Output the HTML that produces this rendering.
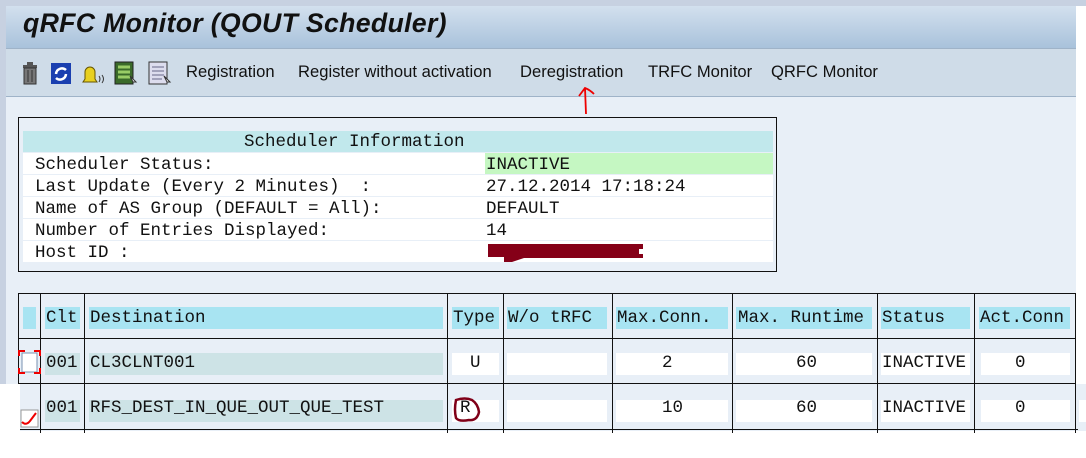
<!DOCTYPE html>
<html><head><meta charset="utf-8"><style>
*{margin:0;padding:0;box-sizing:border-box}
body{width:1086px;height:458px;position:relative;overflow:hidden;background:#fff;font-family:"Liberation Sans",sans-serif}
.a{position:absolute}
.m{font-family:"Liberation Mono","Courier New",monospace;font-size:17.5px;color:#111;white-space:pre;line-height:22px}
.tb{font-size:16.6px;color:#111;top:62px}
.h{background:#a8e4f2;height:22px;top:307px}
.d{height:22px}
.w{background:#fff}
.g{background:#cde3e6}
.vl{position:absolute;width:1px;background:#111;top:293px;height:140px}
.hl{position:absolute;height:1px;background:#111;left:18px}
.ir{position:absolute;left:23px;width:750px;height:21px;background:#fff}
</style></head><body>
<div class="a" style="left:0;top:0;width:1086px;height:384px;background:#c7d1e1"></div>
<div class="a" style="left:6px;top:6px;width:1070px;height:42px;background:linear-gradient(#d3e0ee,#a9c2db)"></div>
<div class="a" style="left:6px;top:48px;width:1070px;height:49px;background:#cfdce8;border-top:1px solid #9fb3c8;border-bottom:1px solid #9fb3c8"></div>
<div class="a" style="left:6px;top:97px;width:1070px;height:334px;background:#e8eff7"></div>
<div class="a" style="left:1076px;top:6px;width:10px;height:378px;background:#fff"></div>
<div class="a" style="left:0;top:384px;width:20px;height:74px;background:#fff"></div>
<div class="a" style="left:20px;top:384px;width:1066px;height:47px;background:#e8eff7"></div>
<div class="a" style="left:23px;top:8px;font-size:26.7px;font-weight:bold;font-style:italic;color:#111;letter-spacing:0.3px">qRFC Monitor (QOUT Scheduler)</div>
<svg class="a" style="left:20px;top:60px" width="160" height="28">
<rect x="3" y="5" width="14" height="3" fill="#555"/><rect x="7" y="2" width="6" height="3" fill="#555"/><rect x="4" y="8" width="12" height="16" fill="#777" stroke="#333"/><path d="M8 10v12M12 10v12" stroke="#333"/>
<rect x="31" y="3" width="20" height="21" fill="#1a3fb0"/><path d="M36 14a6 6 0 0 1 10-4M46 14a6 6 0 0 1-10 4" stroke="#fff" stroke-width="2.5" fill="none"/>
<path d="M63 22h14l-2-3v-7a5 5 0 0 0-10 0v7z" fill="#e8d020" stroke="#665500"/><path d="M79 16q2 3 0 6M82 15q3 4 0 8" stroke="#333" fill="none"/>
<rect x="95" y="2" width="18" height="22" fill="#3a6a2a" stroke="#222"/><path d="M98 7h12M98 12h12M98 17h12" stroke="#9c6" stroke-width="3"/><path d="M110 16l6 6-3 0z" fill="#fff" stroke="#333"/>
<rect x="129" y="2" width="18" height="22" fill="#dde" stroke="#333"/><path d="M132 7h12M132 11h12M132 15h12M132 19h10" stroke="#668"/><path d="M144 16l6 6-3 0z" fill="#fff" stroke="#333"/>
</svg>
<div class="a tb" style="left:186px">Registration</div>
<div class="a tb" style="left:298px">Register without activation</div>
<div class="a tb" style="left:520px">Deregistration</div>
<div class="a tb" style="left:648px">TRFC Monitor</div>
<div class="a tb" style="left:771px">QRFC Monitor</div>
<svg class="a" style="left:570px;top:84px" width="40" height="36"><path d="M16 30L15 4M9 12L15 4Q20 6 24 10" stroke="#e00" stroke-width="1.8" fill="none"/></svg>
<div class="a" style="left:18px;top:117px;width:759px;height:155px;border:1.5px solid #111;background:#e8eff7"></div>
<div class="a" style="left:23px;top:131px;width:750px;height:21px;background:#c1e8ec"></div>
<div class="a m" style="left:244px;top:131px">Scheduler Information</div>
<div class="ir" style="top:153px"></div><div class="a" style="left:485px;top:153px;width:288px;height:21px;background:#c5f7c2"></div>
<div class="ir" style="top:175px"></div><div class="ir" style="top:197px"></div><div class="ir" style="top:219px"></div><div class="ir" style="top:241px"></div>
<div class="a m" style="left:35px;top:154px">Scheduler Status:
Last Update (Every 2 Minutes)  :
Name of AS Group (DEFAULT = All):
Number of Entries Displayed:
Host ID :</div>
<div class="a m" style="left:486px;top:154px">INACTIVE
27.12.2014 17:18:24
DEFAULT
14</div>
<svg class="a" style="left:484px;top:240px" width="165" height="28"><path d="M4 4h155v5h-4v5h4v4H40l-12 4H20v-5H4z" fill="#850018"/></svg>
<div class="hl" style="top:293px;width:1058px"></div>
<div class="hl" style="top:338px;width:1058px"></div>
<div class="hl" style="top:383px;width:1058px"></div>
<div class="hl" style="top:429px;width:1058px;left:20px"></div>
<div class="vl" style="left:18px;height:91px"></div>
<div class="vl" style="left:40px"></div><div class="vl" style="left:84px"></div><div class="vl" style="left:447px"></div><div class="vl" style="left:503px"></div><div class="vl" style="left:612px"></div><div class="vl" style="left:732px"></div><div class="vl" style="left:877px"></div><div class="vl" style="left:974px"></div><div class="vl" style="left:1075px"></div>
<div class="a h" style="left:23px;width:13px"></div>
<div class="a h" style="left:45px;width:35px"></div>
<div class="a h" style="left:89px;width:354px"></div>
<div class="a h" style="left:452px;width:47px"></div>
<div class="a h" style="left:507px;width:100px"></div>
<div class="a h" style="left:616px;width:112px"></div>
<div class="a h" style="left:736px;width:136px"></div>
<div class="a h" style="left:881px;width:89px"></div>
<div class="a h" style="left:979px;width:91px"></div>
<div class="a m" style="left:46px;top:307px">Clt</div><div class="a m" style="left:90px;top:307px">Destination</div><div class="a m" style="left:453px;top:307px">Type</div><div class="a m" style="left:508px;top:307px">W/o tRFC</div><div class="a m" style="left:617px;top:307px">Max.Conn.</div><div class="a m" style="left:738px;top:307px">Max. Runtime</div><div class="a m" style="left:882px;top:307px">Status</div><div class="a m" style="left:980px;top:307px">Act.Conn</div>
<div class="a d g" style="left:45px;top:353px;width:35px"></div><div class="a d g" style="left:89px;top:353px;width:354px"></div>
<div class="a d w" style="left:452px;top:353px;width:47px"></div><div class="a d w" style="left:507px;top:353px;width:100px"></div><div class="a d w" style="left:616px;top:353px;width:112px"></div><div class="a d w" style="left:736px;top:353px;width:136px"></div><div class="a d w" style="left:881px;top:353px;width:89px"></div><div class="a d w" style="left:981px;top:353px;width:89px"></div>
<div class="a d g" style="left:45px;top:400px;width:35px"></div><div class="a d g" style="left:89px;top:400px;width:354px"></div>
<div class="a d w" style="left:452px;top:400px;width:47px"></div><div class="a d w" style="left:507px;top:400px;width:100px"></div><div class="a d w" style="left:616px;top:400px;width:112px"></div><div class="a d w" style="left:736px;top:400px;width:136px"></div><div class="a d w" style="left:881px;top:400px;width:89px"></div><div class="a d w" style="left:981px;top:400px;width:89px"></div><div class="a d w" style="left:1079px;top:400px;width:7px"></div>
<div class="a m" style="left:46px;top:352px">001</div><div class="a m" style="left:90px;top:352px">CL3CLNT001</div><div class="a m" style="left:470px;top:352px">U</div><div class="a m" style="left:662px;top:352px">2</div><div class="a m" style="left:796px;top:352px">60</div><div class="a m" style="left:882px;top:352px">INACTIVE</div><div class="a m" style="left:1015px;top:352px">0</div>
<div class="a m" style="left:46px;top:397px">001</div><div class="a m" style="left:90px;top:397px">RFS_DEST_IN_QUE_OUT_QUE_TEST</div><div class="a m" style="left:460px;top:397px">R</div><div class="a m" style="left:662px;top:397px">10</div><div class="a m" style="left:796px;top:397px">60</div><div class="a m" style="left:882px;top:397px">INACTIVE</div><div class="a m" style="left:1015px;top:397px">0</div>
<svg class="a" style="left:16px;top:348px" width="28" height="84">
<rect x="6" y="5" width="15" height="19" fill="#fff" stroke="#7890b0"/>
<path d="M3 8V3h6M18 3h6v5M3 20v5h6M18 25h6v-5" stroke="#e00" stroke-width="2" fill="none"/>
<rect x="5" y="62" width="17" height="17" fill="#fff" stroke="#999"/>
<path d="M6 74q4 4 8-1l6-8" stroke="#e00" stroke-width="2" fill="none"/>
</svg>
<svg class="a" style="left:450px;top:394px" width="36" height="36"><path d="M6 6q9-3 16 0q6 4 7 12q-2 9-10 8q-10 2-13-2q-2-8 0-18z" stroke="#800018" stroke-width="2.5" fill="none"/></svg>
</body></html>
